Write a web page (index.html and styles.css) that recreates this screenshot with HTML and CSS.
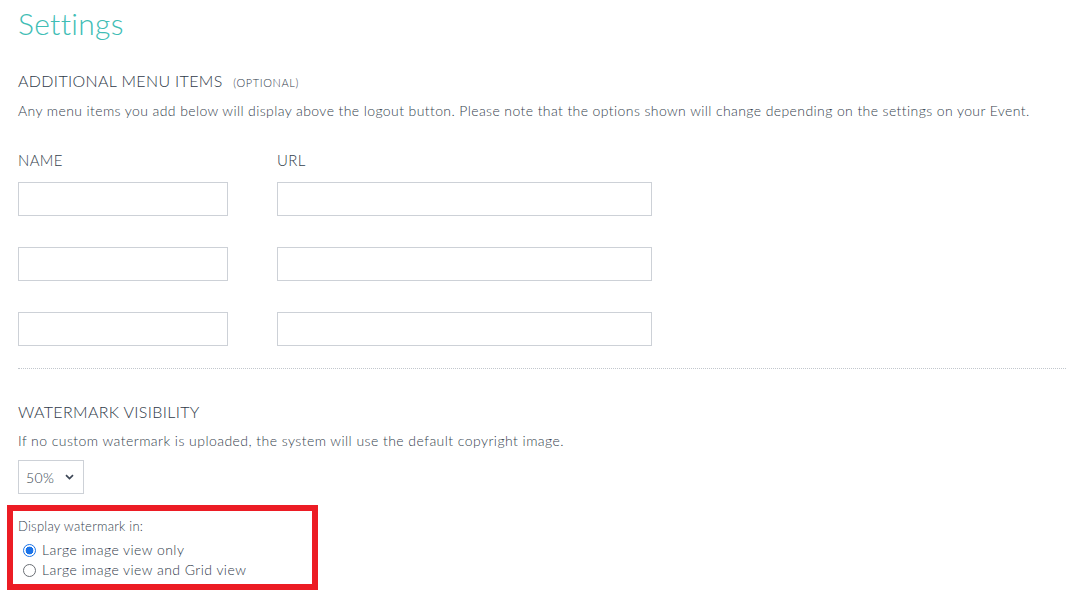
FILE: index.html
```html
<!DOCTYPE html>
<html>
<head>
<meta charset="utf-8">
<link rel="stylesheet" href="styles.css">
</head>
<body>
<div class="page">
  <h1 class="title">Settings</h1>
  <h2 class="section-title">ADDITIONAL MENU ITEMS <span class="optional">(OPTIONAL)</span></h2>
  <p class="desc">Any menu items you add below will display above the logout button. Please note that the options shown will change depending on the settings on your Event.</p>
  <div class="menu-grid">
    <div class="col-label">NAME</div>
    <div class="col-label">URL</div>
    <input class="field name" type="text">
    <input class="field url" type="text">
    <input class="field name" type="text">
    <input class="field url" type="text">
    <input class="field name" type="text">
    <input class="field url" type="text">
  </div>
  <div class="divider"></div>
  <h2 class="section-title wm">WATERMARK VISIBILITY</h2>
  <p class="desc desc-wm">If no custom watermark is uploaded, the system will use the default copyright image.</p>
  <div class="select">
    <span>50%</span>
    <svg class="chev" width="9" height="6" viewBox="0 0 9 6"><path d="M1 1.2 L4.5 4.6 L8 1.2" fill="none" stroke="#3d4756" stroke-width="1.7"/></svg>
  </div>
  <div class="highlight">
    <div class="hl-label">Display watermark in:</div>
    <label class="radio"><span class="dot checked"></span>Large image view only</label>
    <label class="radio"><span class="dot"></span>Large image view and Grid view</label>
  </div>
</div>
</body>
</html>
```

FILE: styles.css
```css
html, body {
  margin: 0;
  padding: 0;
  background: #ffffff;
}
body {
  font-family: Lato, "Open Sans", sans-serif;
  font-weight: 300;
  color: #3a4452;
}
.page {
  padding: 0 0 0 18px;
  display: flex;
  flex-direction: column;
  align-items: flex-start;
}
.title {
  margin: 4px 0 0 0;
  font-weight: 300;
  font-size: 30px;
  line-height: 38px;
  color: #40bdb5;
  letter-spacing: 0.3px;
}
.section-title {
  margin: 29px 0 0 0;
  font-weight: 300;
  font-size: 16px;
  line-height: 20px;
  color: #2f3a49;
  letter-spacing: 0.35px;
}
.optional {
  font-size: 11px;
  margin-left: 6px;
  letter-spacing: 0.6px;
  font-weight: 300;
}
.desc {
  margin: 8px 0 0 0;
  font-size: 14px;
  line-height: 20px;
  color: #353f4e;
  letter-spacing: 0.4px;
}
.desc-wm {
  margin-top: 9px;
  letter-spacing: 0.45px;
}
.menu-grid {
  margin-top: 30px;
  display: grid;
  grid-template-columns: 210px 375px;
  column-gap: 49px;
  row-gap: 31px;
}
.col-label {
  font-size: 15px;
  line-height: 18px;
  color: #353f4e;
  letter-spacing: 0.35px;
  margin-bottom: -20px;
}
.field {
  box-sizing: border-box;
  height: 34px;
  border: 1px solid #cdd1d7;
  margin: 0;
  padding: 0 8px;
  background: #fff;
  font: inherit;
}
.name { width: 210px; }
.url { width: 375px; }
.divider {
  align-self: stretch;
  margin-top: 22px;
  border-top: 1px dotted #c2c7cd;
}
.section-title.wm {
  margin-top: 33px;
}
.select {
  margin-top: 9px;
  box-sizing: border-box;
  width: 66px;
  height: 34px;
  border: 1px solid #cdd1d7;
  display: flex;
  align-items: center;
  justify-content: space-between;
  padding: 0 9px 0 7px;
  font-size: 14px;
  color: #353f4e;
  letter-spacing: 0.4px;
}
.chev { display: block; }
.highlight {
  margin: 11px 0 0 -11px;
  box-sizing: border-box;
  width: 311px;
  height: 85px;
  border: 6px solid #ec1c24;
  padding: 6px 0 0 5px;
  display: flex;
  flex-direction: column;
}
.hl-label {
  font-size: 13px;
  line-height: 18px;
  color: #353f4e;
  letter-spacing: 0.25px;
  margin-bottom: 5px;
}
.radio {
  display: flex;
  align-items: center;
  font-size: 14px;
  line-height: 20px;
  color: #2f3a49;
  letter-spacing: 0.45px;
  margin-left: 5px;
}
.dot {
  box-sizing: border-box;
  width: 13px;
  height: 13px;
  border-radius: 50%;
  border: 1px solid #6b6f75;
  margin: 0 6px 0 0;
  background: #fff;
}
.dot.checked {
  border: 1px solid #1a73e8;
  background: radial-gradient(circle, #1a73e8 0 3.6px, #fff 4.2px);
}
```
